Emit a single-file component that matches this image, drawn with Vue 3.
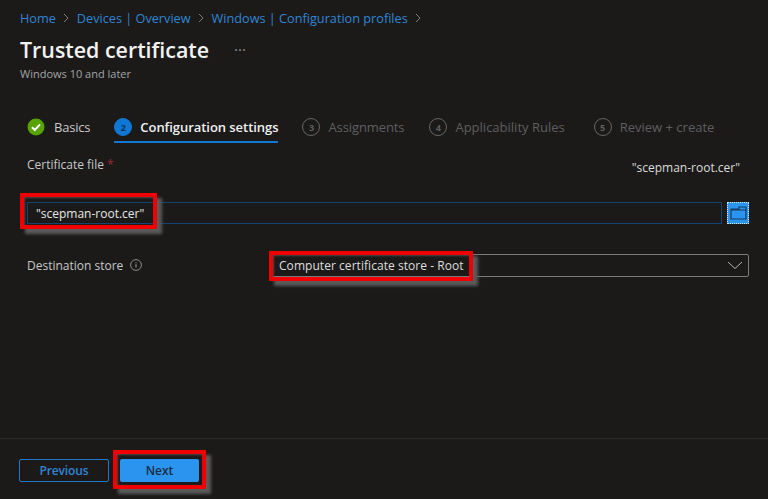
<script setup>
const crumbs = ['Home', 'Devices | Overview', 'Windows | Configuration profiles']
const steps = [
  { n: 2, label: 'Configuration settings', state: 'active' },
  { n: 3, label: 'Assignments', state: 'todo' },
  { n: 4, label: 'Applicability Rules', state: 'todo' },
  { n: 5, label: 'Review + create', state: 'todo' }
]
</script>

<template>
  <div class="page">
    <nav class="crumbs">
      <template v-for="c in crumbs" :key="c">
        <a class="crumb">{{ c }}</a>
        <svg class="sep" width="6" height="10" viewBox="0 0 6 10"><path d="M1 1l4 4-4 4" fill="none" stroke="#7a7a7a" stroke-width="1"/></svg>
      </template>
    </nav>
    <header class="head">
      <h1>Trusted certificate</h1>
      <span class="more">···</span>
    </header>
    <p class="sub">Windows 10 and later</p>

    <div class="tabs">
      <div class="tab done">
        <svg width="18" height="18" viewBox="0 0 18 18"><circle cx="9" cy="9" r="8.5" fill="#57a300"/><path d="M5 9.2l2.8 2.8L13 6.4" fill="none" stroke="#fff" stroke-width="2"/></svg>
        <span>Basics</span>
      </div>
      <div v-for="s in steps" :key="s.n" class="tab" :class="s.state">
        <span class="num">{{ s.n }}</span>
        <span>{{ s.label }}</span>
      </div>
    </div>

    <main class="form">
      <div class="file-label">
        <span class="label">Certificate file <b>*</b></span>
        <span class="chosen">"scepman-root.cer"</span>
      </div>
      <div class="file-row">
        <div class="file-input">
          <span class="file-name">"scepman-root.cer"</span>
          <i class="mark mark-file"></i>
        </div>
        <button class="browse" aria-label="Browse">
          <svg width="17" height="14" viewBox="0 0 17 14"><path d="M1 4h15v9H1zM1 4V3h8V1h6.500l.5.500V4" fill="none" stroke="#173a5c" stroke-width="1.200"/></svg>
        </button>
      </div>
      <div class="store-row">
        <span class="store-label">
          <span class="label">Destination store</span>
          <svg width="12" height="12" viewBox="0 0 12 12"><circle cx="6" cy="6" r="5.400" fill="none" stroke="#8a8a8a"/><path d="M6 5.200v3.300M6 3.200v1" stroke="#a0a0a0"/></svg>
        </span>
        <div class="select">
          <span>Computer certificate store - Root</span>
          <svg width="16" height="8" viewBox="0 0 16 8"><path d="M1 1l7 6.500 7-6.500" fill="none" stroke="#b5b5b5" stroke-width="1"/></svg>
          <i class="mark mark-store"></i>
        </div>
      </div>
    </main>

    <footer class="foot">
      <button class="prev">Previous</button>
      <button class="next">Next<i class="mark mark-next"></i></button>
    </footer>
  </div>
</template>

<style>
html, body { margin: 0; background: #1b1a19; }
</style>

<style scoped>
.page {
  width: 768px;
  height: 499px;
  box-sizing: border-box;
  background: #1b1a19;
  display: flex;
  flex-direction: column;
  overflow: hidden;
  font-family: "Open Sans", "Noto Sans", sans-serif;
  font-size: 12px;
  color: #d6d6d6;
}
.crumbs {
  display: flex;
  align-items: center;
  gap: 7.500px;
  height: 18px;
  margin: 9px 0 0 20px;
  font-size: 12.700px;
}
.crumb { color: #2f86d6; }
.head {
  display: flex;
  align-items: center;
  height: 32px;
  margin: 6px 0 0 20px;
}
h1 {
  margin: 0;
  font-size: 21.400px;
  font-weight: 600;
  color: #f2f2f2;
}
.more { margin-left: 25px; color: #8f8f8f; font-size: 15px; }
.sub { margin: 1px 0 0 20px; height: 16px; line-height: 16px; font-size: 11px; color: #a5a5a5; }
.tabs {
  display: flex;
  align-items: flex-start;
  gap: 24px;
  margin: 28px 0 0 27px;
  height: 33px;
  font-size: 13px;
}
.tab {
  display: flex;
  align-items: center;
  gap: 8px;
  height: 33px;
  box-sizing: border-box;
  padding: 4px 0 3px;
  white-space: nowrap;
}
.tab.done { color: #c8c8c8; gap: 9px; letter-spacing: -0.2px; }
.tab.active {
  color: #f0f0f0;
  font-weight: 600;
  letter-spacing: -0.05px;
  border-bottom: 2px solid #0f78d4;
  padding-bottom: 1px;
}
.tab.todo { color: #5e5e5e; }
.tab:nth-child(3) { letter-spacing: -0.1px; }
.tab:nth-child(4) { margin-left: 1px; }
.tab:nth-child(5) { margin-left: 5px; }
.num {
  width: 18px;
  height: 18px;
  box-sizing: border-box;
  border-radius: 50%;
  border: 1px solid #666;
  display: flex;
  align-items: center;
  justify-content: center;
  font-size: 9px;
  font-weight: 700;
  letter-spacing: 0;
}
.active .num { background: #0f78d4; border-color: #0f78d4; color: #10345a; }
.form { flex: 1; padding: 0 19px 0 27px; }
.label { color: #c8c8c8; }
.label b { color: #a4262c; font-weight: 400; }
.file-label {
  display: flex;
  justify-content: space-between;
  align-items: flex-start;
  height: 59px;
  padding: 13px 9px 0 0;
  box-sizing: border-box;
  line-height: 18px;
}
.chosen { margin-top: 3px; color: #dcdcdc; }
.file-row { display: flex; gap: 5px; height: 22px; }
.file-input {
  position: relative;
  z-index: 1;
  flex: 1;
  box-sizing: border-box;
  border: 1px solid #0f4474;
  display: flex;
  align-items: center;
  padding-left: 8px;
  color: #e8e8e8;
}
.browse {
  width: 22px;
  height: 22px;
  padding: 0;
  background: #2b94ee;
  border: 1px dotted #cfe6fb;
  box-sizing: border-box;
  display: flex;
  align-items: center;
  justify-content: center;
}
.store-row {
  display: flex;
  align-items: center;
  height: 24px;
  margin-top: 29px;
}
.store-label {
  width: 243px;
  display: flex;
  align-items: center;
  gap: 7px;
  flex: none;
}
.select {
  position: relative;
  flex: 1;
  height: 23px;
  box-sizing: border-box;
  border: 1px solid #7c7c7c;
  border-radius: 2px;
  display: flex;
  align-items: center;
  justify-content: space-between;
  padding: 0 5px 0 8px;
  color: #dedede;
  letter-spacing: 0.05px;
}
.foot {
  height: 61px;
  box-sizing: border-box;
  border-top: 1px solid #2c2b2a;
  display: flex;
  gap: 11px;
  padding: 20px 0 0 19px;
  align-items: flex-start;
}
button { font: inherit; }
.prev {
  width: 90px;
  height: 23px;
  padding: 0;
  background: none;
  border: 1px solid #1f78c8;
  border-radius: 2px;
  color: #2f86d6;
  font-weight: 600;
  letter-spacing: -0.1px;
}
.next {
  position: relative;
  width: 79px;
  height: 23px;
  padding: 0;
  background: #2b94ee;
  border: 0;
  border-radius: 2px;
  color: #1b2c3d;
  font-weight: 600;
}
.mark {
  position: absolute;
  box-sizing: border-box;
  border: 4px solid #f00000;
  box-shadow: 5px 5px 3px #5a5a5a, inset 1px 1px 2px #4a4a4a;
  pointer-events: none;
}
.mark-file { left: -8px; top: -10px; width: 137px; height: 36px; }
.mark-store { left: -2px; top: -4px; width: 204px; height: 30px; }
.mark-next { left: -7px; top: -9px; width: 93px; height: 39px; }
</style>
